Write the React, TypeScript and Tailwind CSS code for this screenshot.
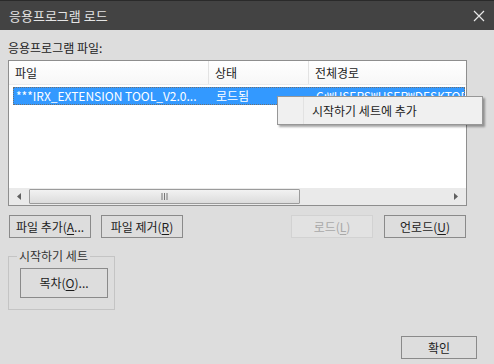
import React from "react";

const font = { fontFamily: '"Noto Sans CJK KR", "Liberation Sans", sans-serif' };

function Btn({
  children,
  disabled,
  className = "",
}: {
  children: React.ReactNode;
  disabled?: boolean;
  className?: string;
}) {
  return (
    <button
      type="button"
      className={
        "flex h-[23px] w-[82px] items-center justify-center text-[12px] leading-none " +
        (disabled
          ? "border border-[#d2d2d2] bg-[#e2e2e2] text-[#a8a8a8] "
          : "border border-[#8a8a8a] bg-[#dddddd] text-[#1b1b1b] ") +
        className
      }
    >
      {children}
    </button>
  );
}

function U({ children }: { children: React.ReactNode }) {
  return <span className="underline underline-offset-2">{children}</span>;
}

export default function App() {
  return (
    <div
      style={font}
      className="relative flex h-[364px] w-[494px] flex-col overflow-hidden bg-[#dddddd] text-[#1b1b1b]"
    >
      {/* title bar */}
      <div className="flex h-[30px] shrink-0 items-center justify-between border-t border-[#2a2a2a] bg-[#434343] pl-[9px] pr-[8px]">
        <span className="text-[13px] text-[#e4e4e4]">응용프로그램 로드</span>
        <svg width="12" height="12" viewBox="0 0 12 12" className="mr-[1px]">
          <path d="M1 1 L11 11 M11 1 L1 11" stroke="#e8e8e8" strokeWidth="1.2" />
        </svg>
      </div>

      <div className="flex flex-1 flex-col px-[8px]">
        <div className="mt-[10px] h-[16px] text-[12px] leading-[16px]">응용프로그램 파일:</div>

        {/* list view */}
        <div className="mt-[4px] flex h-[146px] w-[459px] flex-col border border-[#8e8e8e] bg-white">
          <div className="flex h-[24px] shrink-0 border-b border-[#ececec] bg-gradient-to-b from-white to-[#f7f7f7] text-[12px]">
            <div className="flex w-[200px] items-center border-r border-[#e3e3e3] pl-[6px]">파일</div>
            <div className="flex w-[100px] items-center border-r border-[#e3e3e3] pl-[6px]">상태</div>
            <div className="flex flex-1 items-center pl-[6px]">전체경로</div>
          </div>
          <div className="ml-[4px] mr-[1px] mt-[2px] flex h-[18px] items-center overflow-hidden whitespace-nowrap border border-dotted border-[#6f6f6f] bg-[#3399ff] text-[12px] text-white">
            <div className="w-[196px] shrink-0 pl-[2px]">***IRX_EXTENSION TOOL_V2.0...</div>
            <div className="w-[100px] shrink-0 pl-[6px]">로드됨</div>
            <div className="pl-[6px]">C:₩USERS₩USER₩DESKTOP₩IRX</div>
          </div>
          <div className="flex-1" />
          {/* horizontal scrollbar */}
          <div className="flex h-[17px] shrink-0 items-center bg-[#eaeaea]">
            <div className="flex w-[20px] items-center justify-center">
              <svg width="4" height="7" viewBox="0 0 4 7">
                <path d="M4 0 L0 3.5 L4 7 Z" fill="#606060" />
              </svg>
            </div>
            <div className="flex h-[15px] w-[271px] items-center justify-center rounded-[1px] border border-[#9b9b9b] bg-gradient-to-b from-[#f2f2f2] to-[#dcdcdc]">
              <svg width="7" height="7" viewBox="0 0 7 7">
                <path d="M1 0 V7 M3.5 0 V7 M6 0 V7" stroke="#777" strokeWidth="1" />
              </svg>
            </div>
            <div className="flex-1" />
            <div className="flex w-[20px] items-center justify-center">
              <svg width="4" height="7" viewBox="0 0 4 7">
                <path d="M0 0 L4 3.5 L0 7 Z" fill="#606060" />
              </svg>
            </div>
          </div>
        </div>

        {/* buttons */}
        <div className="mt-[9px] flex">
          <Btn className="ml-[1px]">
            파일 추가(<U>A</U>...
          </Btn>
          <Btn className="ml-[10px]">
            파일 제거(<U>R</U>)
          </Btn>
          <Btn disabled className="ml-[108px]">
            로드(<U>L</U>)
          </Btn>
          <Btn className="ml-[11px]">
            언로드(<U>U</U>)
          </Btn>
        </div>

        {/* start-up set group */}
        <fieldset className="mt-[10px] h-[62px] w-[107px] min-w-0 border border-[#c4c4c4] pl-[11px] pr-[4px]">
          <legend className="ml-[-3px] px-[2px] text-[12px] leading-[16px] text-[#333]">시작하기 세트</legend>
          <button
            type="button"
            className="mt-[4px] flex h-[30px] w-[88px] items-center justify-center border border-[#8a8a8a] bg-[#dddddd] text-[12px]"
          >
            목차(<U>O</U>)...
          </button>
        </fieldset>

        <div className="mt-auto flex justify-end pb-[5px] pr-[9px]">
          <button
            type="button"
            className="flex h-[23px] w-[76px] items-center justify-center border border-[#8a8a8a] bg-[#dddddd] text-[12px]"
          >
            확인
          </button>
        </div>
      </div>

      {/* context menu */}
      <div className="absolute left-[277px] top-[96px] flex h-[29px] w-[206px] items-center border border-[#979797] bg-[#f0f0f0] shadow-[2px_2px_2px_rgba(0,0,0,0.35)]">
        <div className="h-full w-[26px] border-r border-[#e2e2e2]" />
        <span className="ml-[8px] text-[12px] text-[#1b1b1b]">시작하기 세트에 추가</span>
      </div>
    </div>
  );
}
